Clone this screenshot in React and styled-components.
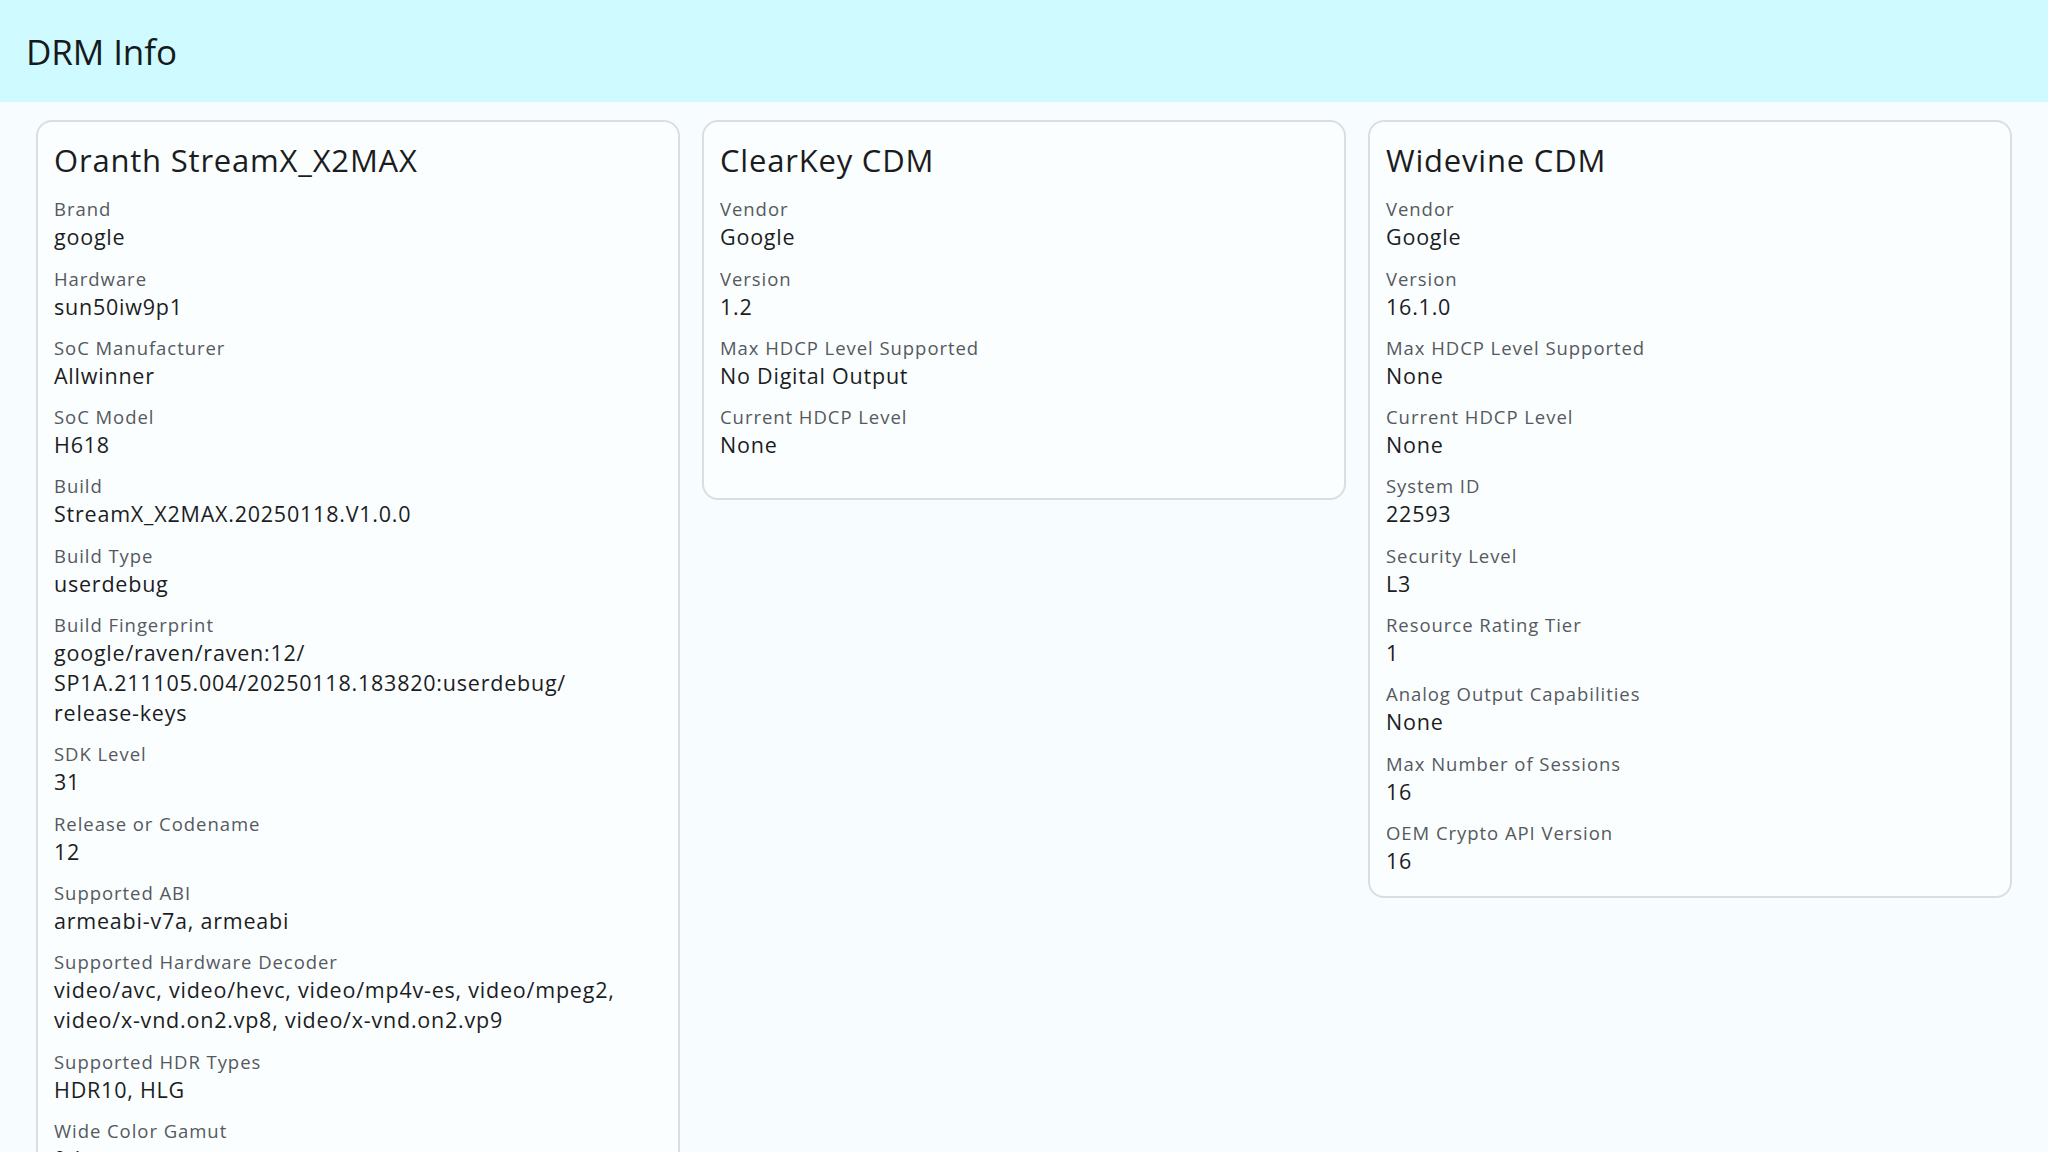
import React from "react";
import styled, { createGlobalStyle } from "styled-components";

const GlobalStyle = createGlobalStyle`
  html, body {
    margin: 0;
    padding: 0;
    background: #f7fdfe;
    font-family: "Open Sans", "Noto Sans", sans-serif;
    color: #1b1d1f;
  }
`;

const Page = styled.div`
  min-height: 100vh;
  background: #f7fdfe;
`;

const TopBar = styled.header`
  height: 102px;
  background: #cffaff;
  display: flex;
  align-items: center;
  padding: 0 26px;
  box-sizing: border-box;
`;

const TopTitle = styled.h1`
  margin: 0;
  font-size: 35px;
  font-weight: 400;
  color: #161a1c;
  letter-spacing: -0.1px;
`;

const Grid = styled.main`
  display: grid;
  grid-template-columns: repeat(3, 1fr);
  gap: 22px;
  padding: 18px 36px;
  align-items: start;
`;

const Card = styled.section`
  background: #fbfeff;
  border: 2px solid #dcdde3;
  border-radius: 16px;
  padding: 17px 16px ${({ $extra }) => ($extra ? 38 : 20)}px;
  display: flex;
  flex-direction: column;
  gap: 12.3px;
`;

const CardTitle = styled.h2`
  margin: 0 0 2px;
  font-size: 31px;
  line-height: 42px;
  font-weight: 400;
  color: #1a1c1e;
  letter-spacing: 0.8px;
`;

const Field = styled.div`
  display: flex;
  flex-direction: column;
`;

const Label = styled.div`
  font-size: 18.5px;
  line-height: 27px;
  color: #55595e;
  letter-spacing: 0.95px;
`;

const Value = styled.div`
  font-size: 21.5px;
  line-height: 30px;
  color: #1b1d1f;
  letter-spacing: 0.78px;
  white-space: pre-line;
`;

const cards = [
  {
    title: "Oranth StreamX_X2MAX",
    rows: [
      ["Brand", "google"],
      ["Hardware", "sun50iw9p1"],
      ["SoC Manufacturer", "Allwinner"],
      ["SoC Model", "H618"],
      ["Build", "StreamX_X2MAX.20250118.V1.0.0"],
      ["Build Type", "userdebug"],
      [
        "Build Fingerprint",
        "google/raven/raven:12/\nSP1A.211105.004/20250118.183820:userdebug/\nrelease-keys",
      ],
      ["SDK Level", "31"],
      ["Release or Codename", "12"],
      ["Supported ABI", "armeabi-v7a, armeabi"],
      [
        "Supported Hardware Decoder",
        "video/avc, video/hevc, video/mp4v-es, video/mpeg2,\nvideo/x-vnd.on2.vp8, video/x-vnd.on2.vp9",
      ],
      ["Supported HDR Types", "HDR10, HLG"],
      ["Wide Color Gamut", "false"],
      ["OpenGL ES Version", "3.2"],
    ],
  },
  {
    title: "ClearKey CDM",
    extra: true,
    rows: [
      ["Vendor", "Google"],
      ["Version", "1.2"],
      ["Max HDCP Level Supported", "No Digital Output"],
      ["Current HDCP Level", "None"],
    ],
  },
  {
    title: "Widevine CDM",
    rows: [
      ["Vendor", "Google"],
      ["Version", "16.1.0"],
      ["Max HDCP Level Supported", "None"],
      ["Current HDCP Level", "None"],
      ["System ID", "22593"],
      ["Security Level", "L3"],
      ["Resource Rating Tier", "1"],
      ["Analog Output Capabilities", "None"],
      ["Max Number of Sessions", "16"],
      ["OEM Crypto API Version", "16"],
    ],
  },
];

export default function App() {
  return (
    <Page>
      <GlobalStyle />
      <TopBar>
        <TopTitle>DRM Info</TopTitle>
      </TopBar>
      <Grid>
        {cards.map((card) => (
          <Card key={card.title} $extra={card.extra}>
            <CardTitle>{card.title}</CardTitle>
            {card.rows.map(([label, value]) => (
              <Field key={label}>
                <Label>{label}</Label>
                <Value>{value}</Value>
              </Field>
            ))}
          </Card>
        ))}
      </Grid>
    </Page>
  );
}
